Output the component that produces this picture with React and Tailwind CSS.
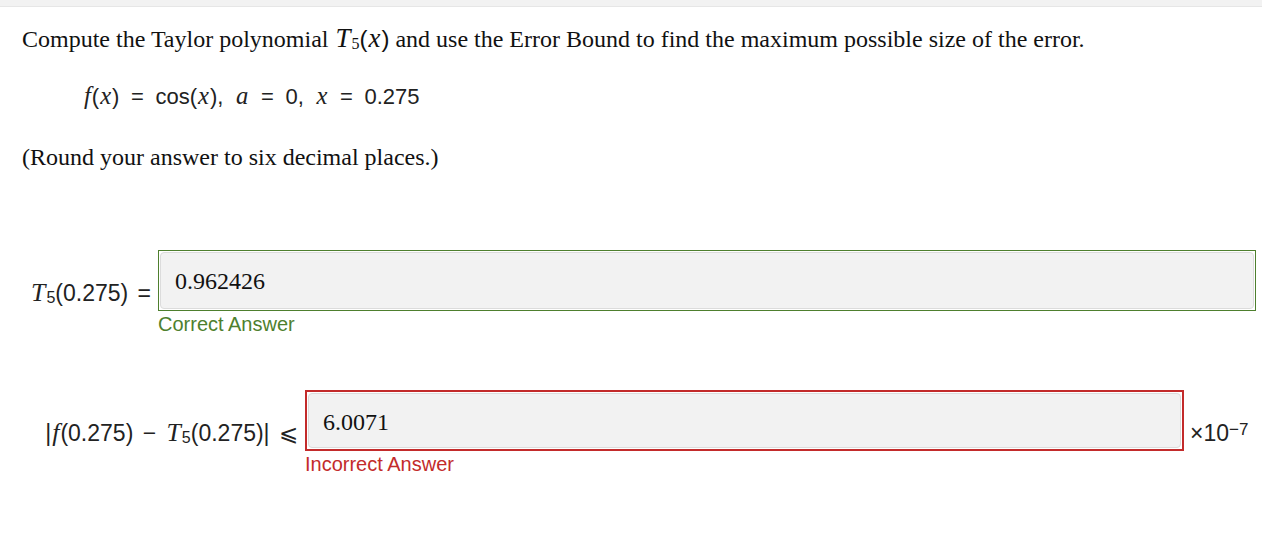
import React from "react";

const serif = { fontFamily: '"Liberation Serif", "Times New Roman", serif' };

const V = ({ children }) => (
  <span className="italic text-[1.12em] leading-none px-[1px]" style={serif}>
    {children}
  </span>
);

const T5 = () => (
  <span>
    <V>T</V>
    <sub className="text-[16px] relative top-[2px] align-baseline">5</sub>
  </span>
);

const AnswerRow = ({ label, value, correct, suffix, labelClass, boxClass, className }) => (
  <div className={`flex items-start ${className}`}>
    <div
      className={`h-[61px] flex items-end justify-end pb-[1px] pr-[7px] whitespace-nowrap text-[23px] text-[#222] [word-spacing:3px] ${labelClass}`}
    >
      {label}
    </div>
    <div className="flex flex-col">
      <div className="flex items-end">
        <div
          className={`h-[61px] p-[1px] ${boxClass} ${
            correct ? "border border-[#4e7f2e]" : "border-2 border-[#c32b2b]"
          }`}
        >
          <div
            className="h-full bg-[#f2f2f2] border border-[#dcdcdc] rounded-[4px] flex items-start pt-[10px] pl-[14px] text-[24px] text-[#111]"
            style={serif}
          >
            {value}
          </div>
        </div>
        {suffix}
      </div>
      <div
        className={`text-[20px] leading-[24px] mt-[1px] ${
          correct ? "text-[#4e7f2e]" : "text-[#c32b2b]"
        }`}
      >
        {correct ? "Correct Answer" : "Incorrect Answer"}
      </div>
    </div>
  </div>
);

export default function App() {
  return (
    <div
      className="w-[1262px] h-[546px] bg-white overflow-hidden text-[#111]"
      style={{ fontFamily: '"Liberation Sans", Arial, sans-serif' }}
    >
      <div className="h-[7px] bg-[#f2f2f2] border-b border-[#e6e6e6]" />

      <div className="pl-[22px]">
        <p className="mt-[18px] text-[24px] leading-[28px]" style={serif}>
          Compute the Taylor polynomial <T5 />
          <span style={{ fontFamily: '"Liberation Sans", Arial, sans-serif' }}>(</span>
          <V>x</V>
          <span style={{ fontFamily: '"Liberation Sans", Arial, sans-serif' }}>)</span> and use
          the Error Bound to find the maximum possible size of the error.
        </p>

        <p className="mt-[30px] ml-[61px] text-[22px] leading-[28px] text-[#222] [word-spacing:5.5px]">
          <V>f</V>(<V>x</V>) = cos(<V>x</V>), <V>a</V> = 0, <V>x</V> = 0.275
        </p>

        <p className="mt-[32px] text-[24px] leading-[28px]" style={serif}>
          (Round your answer to six decimal places.)
        </p>
      </div>

      <AnswerRow
        className="mt-[79px] pl-[29px]"
        labelClass="w-[129px]"
        boxClass="w-[1098px]"
        correct
        value="0.962426"
        label={
          <span>
            <T5 />
            (0.275) =
          </span>
        }
      />

      <AnswerRow
        className="mt-[54px] pl-[28px]"
        labelClass="w-[277px]"
        boxClass="w-[879px]"
        value="6.0071"
        suffix={
          <span className="ml-[6px] mb-[1px] text-[23px] whitespace-nowrap text-[#222]">
            ×10<sup className="text-[17px] relative -top-[6px]">−7</sup>
          </span>
        }
        label={
          <span>
            |<V>f</V>(0.275) − <T5 />
            (0.275)| ⩽
          </span>
        }
      />
    </div>
  );
}
